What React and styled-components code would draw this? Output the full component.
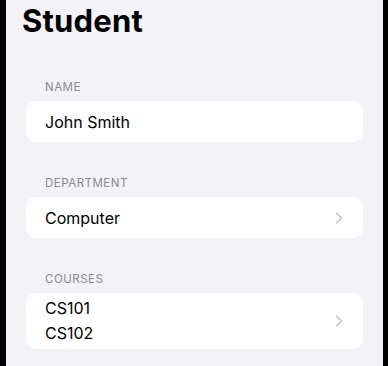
import React from 'react';
import styled, { createGlobalStyle } from 'styled-components';

const GlobalStyle = createGlobalStyle`
  html, body {
    margin: 0;
    padding: 0;
    background: #000;
  }
  body {
    font-family: Inter, "Liberation Sans", sans-serif;
    -webkit-font-smoothing: antialiased;
  }
`;

const Screen = styled.div`
  margin-left: 6px;
  width: 377px;
  height: 366px;
  background: #f2f2f7;
  padding: 2px 20px 0 20px;
  box-sizing: border-box;
  overflow: hidden;
`;

const Title = styled.h1`
  margin: 0 0 40px -4px;
  font-size: 31px;
  line-height: 38px;
  font-weight: 700;
  color: #000;
  letter-spacing: 0.2px;
`;

const Section = styled.section`
  margin-bottom: 34px;
`;

const Label = styled.div`
  padding-left: 19px;
  margin-bottom: 7px;
  font-size: 11.5px;
  line-height: 14px;
  color: #8a8a8e;
  text-transform: uppercase;
  letter-spacing: 0.5px;
`;

const Card = styled.div`
  display: flex;
  align-items: center;
  justify-content: space-between;
  min-height: 41px;
  padding: ${(p) => (p.$multi ? '3px 20px 3px 19px' : '0 20px 0 19px')};
  box-sizing: border-box;
  background: #fff;
  border-radius: 10px;
`;

const Lines = styled.div`
  display: flex;
  flex-direction: column;
`;

const Value = styled.div`
  font-size: 16px;
  line-height: ${(p) => (p.$multi ? '25px' : '20px')};
  color: #000;
`;

const Chevron = () => (
  <svg width="8" height="12" viewBox="0 0 8 12" fill="none">
    <path d="M1.5 1 L6.5 6 L1.5 11" stroke="#c4c4c7" strokeWidth="1.6" strokeLinecap="round" strokeLinejoin="round" />
  </svg>
);

const App = () => (
  <>
    <GlobalStyle />
    <Screen>
      <Title>Student</Title>
      <Section>
        <Label>Name</Label>
        <Card>
          <Value>John Smith</Value>
        </Card>
      </Section>
      <Section>
        <Label>Department</Label>
        <Card>
          <Value>Computer</Value>
          <Chevron />
        </Card>
      </Section>
      <Section>
        <Label>Courses</Label>
        <Card $multi>
          <Lines>
            <Value $multi>CS101</Value>
            <Value $multi>CS102</Value>
          </Lines>
          <Chevron />
        </Card>
      </Section>
    </Screen>
  </>
);

export default App;
